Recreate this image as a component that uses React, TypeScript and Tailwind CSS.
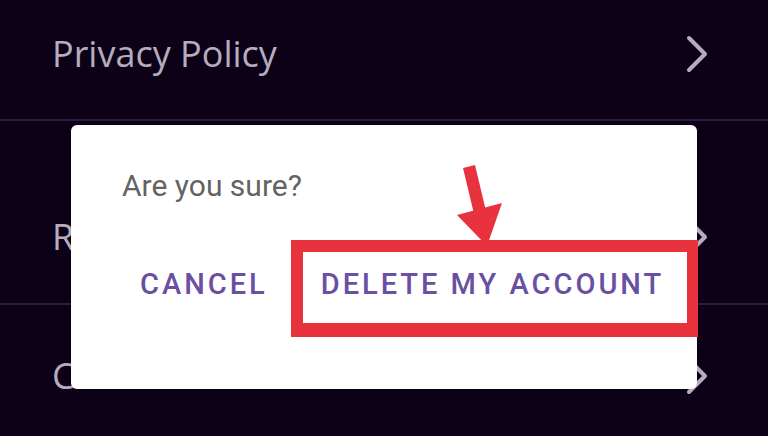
import React from 'react';

const Chevron: React.FC = () => (
  <svg width="24" height="38" viewBox="0 0 24 38" fill="none" className="shrink-0">
    <polyline
      points="4,3 20,19 4,35"
      stroke="#b3adbf"
      strokeWidth="4"
      strokeLinecap="round"
      strokeLinejoin="round"
    />
  </svg>
);

interface RowProps {
  label: string;
  className: string;
}

const SettingsRow: React.FC<RowProps> = ({ label, className }) => (
  <div className={`flex items-center justify-between pl-[52px] pr-[59px] border-b-2 border-[#2a1d40] ${className}`}>
    <span className="text-[36px] leading-[48px] text-[#b3adbf] font-['Open_Sans',sans-serif]">
      {label}
    </span>
    <Chevron />
  </div>
);

export default function App() {
  return (
    <div className="relative h-[436px] w-[768px] overflow-hidden bg-[#0d0118]">
      {/* settings list behind the dialog */}
      <SettingsRow label="Privacy Policy" className="h-[121px] pt-[24px] pb-[35px]" />
      <SettingsRow label="Report a Problem" className="h-[184px] pt-[90px] pb-[40px]" />
      <SettingsRow label="Contact Customer Service" className="h-[184px] pt-[40px] pb-[80px] border-b-0" />

      {/* confirm dialog */}
      <div className="absolute left-[71px] top-[125px] h-[264px] w-[626px] rounded-[6px] bg-white font-['Roboto',sans-serif]">
        <p className="pl-[51px] pt-[43px] text-[30px] leading-[36px] text-[#636363]">Are you sure?</p>
        <div className="mt-[62px] flex gap-[53px] pl-[69px] text-[29px] leading-[36px] font-medium tracking-[3px] text-[#6a4fa3]">
          <button>CANCEL</button>
          <button>DELETE MY ACCOUNT</button>
        </div>

        {/* red highlight annotation */}
        <div className="pointer-events-none absolute left-[220px] top-[115px] h-[97px] w-[407px] border-[12px] border-r-[11px] border-b-[14px] border-[#e8333f]" />
        <svg
          className="pointer-events-none absolute left-0 top-0"
          width="626"
          height="264"
          viewBox="0 0 626 264"
        >
          <polygon points="392,43 404,40 415,86 403,89" fill="#e8333f" />
          <polygon points="386,90 431,78 416,121" fill="#e8333f" />
        </svg>
      </div>
    </div>
  );
}
